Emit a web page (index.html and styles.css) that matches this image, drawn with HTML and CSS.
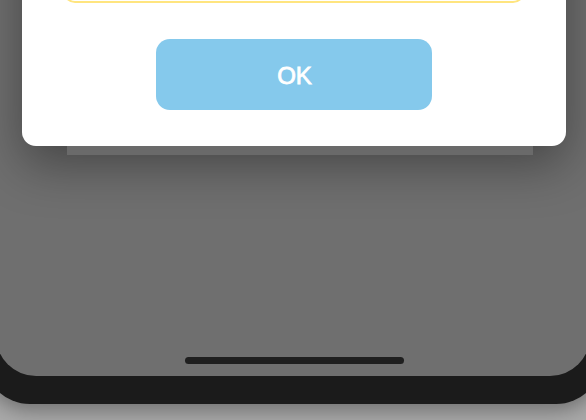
FILE: index.html
```html
<!DOCTYPE html>
<html lang="en">
<head>
<meta charset="utf-8">
<title>Dialog</title>
<link rel="stylesheet" href="styles.css">
</head>
<body>
  <div class="phone">
    <div class="screen">
      <div class="modal">
        <div class="dialog">
          <div class="notice"></div>
          <button class="ok-btn" type="button">OK</button>
        </div>
        <div class="sheet-edge"></div>
      </div>
      <div class="home-indicator"></div>
    </div>
  </div>
</body>
</html>
```

FILE: styles.css
```css
html, body {
  margin: 0;
  padding: 0;
  height: 420px;
  overflow: hidden;
}

body {
  background: #a9a9a9;
  font-family: "Liberation Sans", Arial, sans-serif;
}

.phone {
  width: 618px;
  margin-left: -16px;
  padding: 0 12px 28px;
  box-sizing: border-box;
  background: #1b1b1b;
  border-radius: 0 0 46px 46px;
  box-shadow: 0 6px 20px rgba(0, 0, 0, 0.35);
}

.screen {
  height: 376px;
  background: #6f6f6f;
  border-radius: 0 0 40px 40px;
  display: flex;
  flex-direction: column;
  justify-content: space-between;
  align-items: center;
}

.modal {
  display: flex;
  flex-direction: column;
  align-items: center;
}

.dialog {
  width: 544px;
  margin-top: -107px;
  margin-left: 2px;
  padding: 30px 41px 36px;
  box-sizing: border-box;
  background: #ffffff;
  border-radius: 14px;
  box-shadow: 0 18px 50px rgba(0, 0, 0, 0.38);
  display: flex;
  flex-direction: column;
  align-items: center;
  gap: 36px;
}

.notice {
  align-self: stretch;
  height: 80px;
  box-sizing: border-box;
  border: 2px solid #ffe57f;
  border-radius: 12px;
  background: #ffffff;
}

.ok-btn {
  width: 276px;
  height: 71px;
  border: none;
  border-radius: 14px;
  background: #85c9ec;
  color: #ffffff;
  font-family: "Liberation Sans", Arial, sans-serif;
  font-size: 24px;
  font-weight: 400;
  -webkit-text-stroke: 0.8px #ffffff;
  padding: 3px 0 0 1px;
}

.sheet-edge {
  width: 466px;
  height: 9px;
  margin-left: 14px;
  background: #6a6a6a;
}

.home-indicator {
  width: 219px;
  height: 7px;
  margin-bottom: 12px;
  margin-left: 2px;
  border-radius: 4px;
  background: #1f1f1f;
}
```
